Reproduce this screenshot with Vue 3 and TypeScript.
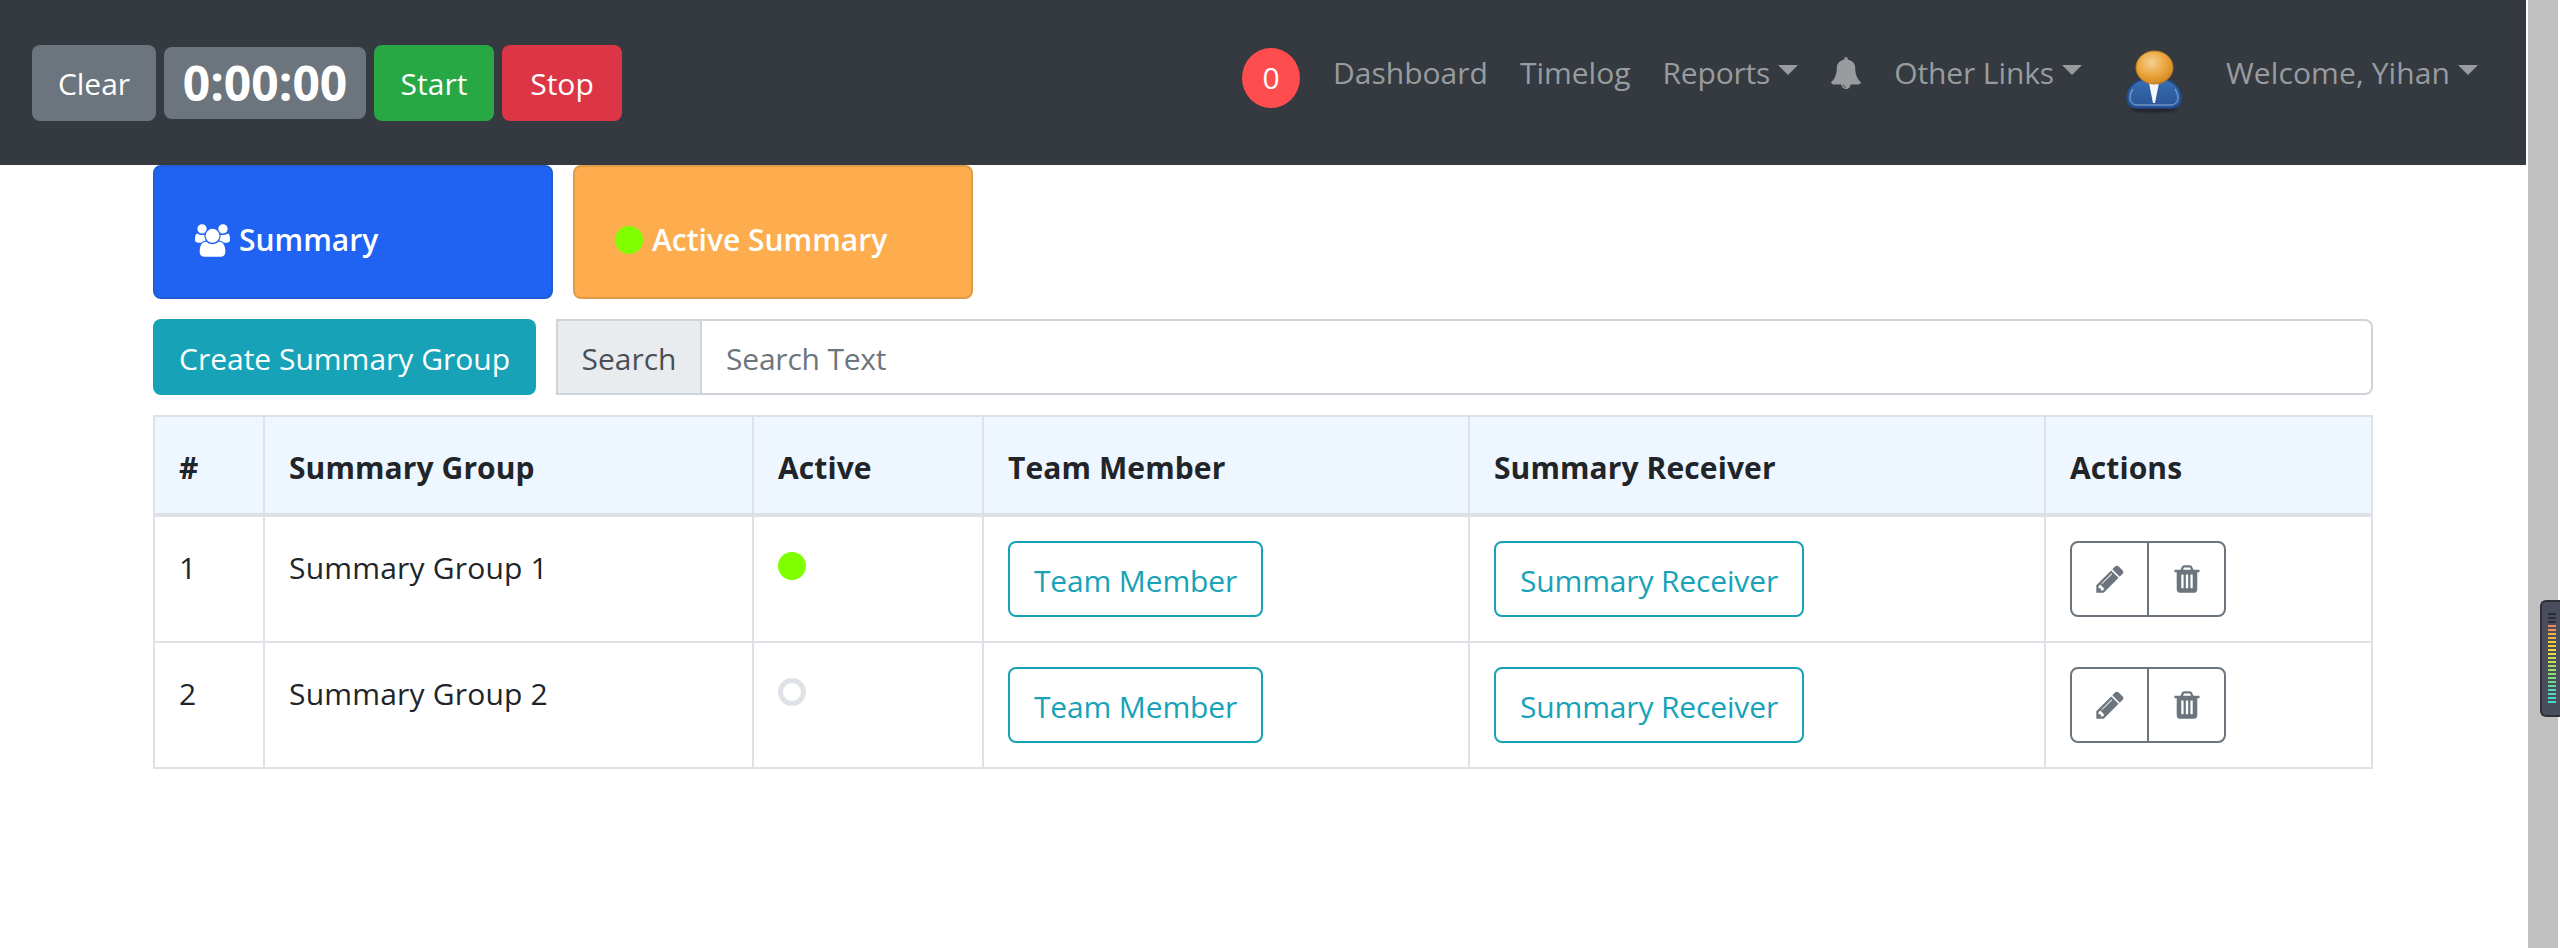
<script setup lang="ts">
interface SummaryRow {
  id: number
  name: string
  active: boolean
}

const rows: SummaryRow[] = [
  { id: 1, name: "Summary Group 1", active: true },
  { id: 2, name: "Summary Group 2", active: false },
]

const columns = ["#", "Summary Group", "Active", "Team Member", "Summary Receiver", "Actions"]
const columnWidths = [110, 489, 230, 486, 576, 327]

// little level meter on the scrollbar, top three are off
const meterColors = [
  "#2b2d38", "#2b2d38", "#2b2d38",
  "#f08a5c", "#f09a55", "#f5ae45", "#f5b83d", "#f7c535", "#f5cf35", "#f2d93a",
  "#e5dd45", "#d4df4d", "#c4e055", "#b0e05c", "#9fdf65", "#8ede70", "#7edd80",
  "#6cdc90", "#5cdca0", "#50dcb0", "#48dcbc", "#42dcc4", "#3edccc",
]

const pencilPath =
  "M491 1536l91-91-235-235-91 91v107h128v128h107zm523-928q0-22-22-22-10 0-17 7l-542 542q-7 7-7 17 0 22 22 22 10 0 17-7l542-542q7-7 7-17zm-54-192l416 416-832 832h-416v-416zm683 96q0 53-37 90l-166 166-416-416 166-165q36-38 90-38 53 0 91 38l235 234q37 39 37 91z"
const trashPath =
  "M704 1376v-704q0-14-9-23t-23-9h-64q-14 0-23 9t-9 23v704q0 14 9 23t23 9h64q14 0 23-9t9-23zm256 0v-704q0-14-9-23t-23-9h-64q-14 0-23 9t-9 23v704q0 14 9 23t23 9h64q14 0 23-9t9-23zm256 0v-704q0-14-9-23t-23-9h-64q-14 0-23 9t-9 23v704q0 14 9 23t23 9h64q14 0 23-9t9-23zm-544-992h448l-48-117q-7-9-17-11h-317q-10 2-17 11zm928 32v64q0 14-9 23t-23 9h-96v948q0 83-47 143.5t-113 60.5h-832q-66 0-113-58.5t-47-141.5v-952h-96q-14 0-23-9t-9-23v-64q0-14 9-23t23-9h309l70-167q15-37 54-63t79-26h320q40 0 79 26t54 63l70 167h309q14 0 23 9t9 23z"
</script>

<template>
  <div class="page">
    <div class="main">
      <nav class="navbar">
        <div class="timer-group">
          <button class="btn btn-grey">Clear</button>
          <div class="timer">0:00:00</div>
          <button class="btn btn-green">Start</button>
          <button class="btn btn-red">Stop</button>
        </div>

        <div class="nav-right">
          <span class="badge">0</span>
          <a class="nav-link">Dashboard</a>
          <a class="nav-link">Timelog</a>
          <a class="nav-link reports">Reports<i class="caret" /></a>
          <a class="nav-link bell">
            <svg width="32" height="32" viewBox="0 0 1792 1792" fill="currentColor">
              <path d="M912 1696q0-16-16-16-59 0-101.5-42.5t-42.5-101.5q0-16-16-16t-16 16q0 73 51.5 124.5t124.5 51.5q16 0 16-16zm816-288q0 52-38 90t-90 38h-448q0 106-75 181t-181 75-181-75-75-181h-448q-52 0-90-38t-38-90q50-42 91-88t85-119.5 74.5-158.5 50-206 19.5-260q0-152 117-282.5t307-158.5q-8-19-8-39 0-40 28-68t68-28 68 28 28 68q0 20-8 39 190 28 307 158.5t117 282.5q0 139 19.5 260t50 206 74.5 158.5 85 119.5 91 88z" />
            </svg>
          </a>
          <a class="nav-link other">Other Links<i class="caret" /></a>
          <svg class="avatar" width="60" height="66" viewBox="0 0 60 66">
            <defs>
              <radialGradient id="head" cx="0.42" cy="0.35" r="0.7">
                <stop offset="0" stop-color="#f3cf97" />
                <stop offset="0.55" stop-color="#eba63c" />
                <stop offset="1" stop-color="#cf8420" />
              </radialGradient>
              <linearGradient id="suit" x1="0" y1="0" x2="0" y2="1">
                <stop offset="0" stop-color="#3a6db2" />
                <stop offset="1" stop-color="#275394" />
              </linearGradient>
              <filter id="soft"><feGaussianBlur stdDeviation="1.6" /></filter>
            </defs>
            <ellipse cx="30" cy="60" rx="24" ry="3.5" fill="#20232a" filter="url(#soft)" />
            <path d="M17 31C8 34 3 41 3 49c0 6 4 10 10 10h34c6 0 10-4 10-10 0-8-5-15-14-18z" fill="url(#suit)" stroke="#1f4a8a" stroke-width="1.5" />
            <path d="M14 56c-5 0-8-3-8-7 0-3 1-6 3-9M46 56c5 0 8-3 8-7 0-3-1-6-3-9M14 56h32" fill="none" stroke="#7fa3d2" stroke-width="1.4" opacity="0.8" />
            <path d="M25 34h10l-4 20h-2z" fill="#f4f6f8" />
            <ellipse cx="30.5" cy="18.5" rx="18.5" ry="16.5" fill="url(#head)" stroke="#bd7b22" stroke-width="1" />
          </svg>
          <a class="nav-link welcome">Welcome, Yihan<i class="caret" /></a>
        </div>
      </nav>

      <div class="content">
        <div class="tabs">
          <button class="tab tab-blue">
            <svg class="users" width="35" height="33" viewBox="0 0 1920 1792" fill="currentColor">
              <path d="M593 896q-162 5-265 128h-134q-82 0-138-40.5t-56-118.5q0-353 124-353 6 0 43.5 21t97.5 42.5 119 21.5q67 0 133-23-5 37-5 66 0 139 81 256zm1071 637q0 120-73 189.5t-194 69.5h-874q-121 0-194-69.5t-73-189.5q0-53 3.5-103.5t14-109 26.5-108.5 43-97.5 62-81 85.5-53.5 111.5-20q10 0 43 21.5t73 48 107 48 135 21.5 135-21.5 107-48 73-48 43-21.5q61 0 111.5 20t85.5 53.5 62 81 43 97.5 26.5 108.5 14 109 3.5 103.5zm-1024-1277q0 106-75 181t-181 75-181-75-75-181 75-181 181-75 181 75 75 181zm704 384q0 159-112.5 271.5t-271.5 112.5-271.5-112.5-112.5-271.5 112.5-271.5 271.5-112.5 271.5 112.5 112.5 271.5zm576 225q0 78-56 118.5t-138 40.5h-134q-103-123-265-128 81-117 81-256 0-29-5-66 66 23 133 23 59 0 119-21.5t97.5-42.5 43.5-21q124 0 124 353zm-128-609q0 106-75 181t-181 75-181-75-75-181 75-181 181-75 181 75 75 181z" />
            </svg>
            Summary
          </button>
          <button class="tab tab-orange"><i class="dot dot-on" />Active Summary</button>
        </div>

        <div class="toolbar">
          <button class="btn btn-teal">Create Summary Group</button>
          <div class="search">
            <span class="search-label">Search</span>
            <input class="search-input" type="text" placeholder="Search Text" />
          </div>
        </div>

        <table class="summary-table">
          <colgroup>
            <col v-for="(w, i) in columnWidths" :key="i" :style="{ width: w + 'px' }" />
          </colgroup>
          <thead>
            <tr>
              <th v-for="col in columns" :key="col">{{ col }}</th>
            </tr>
          </thead>
          <tbody>
            <tr v-for="row in rows" :key="row.id">
              <td class="text-cell">{{ row.id }}</td>
              <td class="text-cell">{{ row.name }}</td>
              <td class="status"><i class="dot" :class="row.active ? 'dot-on' : 'dot-off'" /></td>
              <td><button class="btn btn-outline">Team Member</button></td>
              <td><button class="btn btn-outline">Summary Receiver</button></td>
              <td>
                <div class="actions">
                  <button class="action">
                    <svg width="32" height="32" viewBox="0 0 1792 1792" fill="currentColor"><path :d="pencilPath" /></svg>
                  </button>
                  <button class="action">
                    <svg width="32" height="32" viewBox="0 0 1792 1792" fill="currentColor"><path :d="trashPath" /></svg>
                  </button>
                </div>
              </td>
            </tr>
          </tbody>
        </table>
      </div>
    </div>

    <div class="scrollbar">
      <div class="meter">
        <span v-for="(c, i) in meterColors" :key="i" class="meter-bar" :style="{ background: c }" />
      </div>
    </div>
  </div>
</template>

<style scoped>
.page {
  display: flex;
  height: 948px;
  font-family: "Open Sans", "Liberation Sans", sans-serif;
  font-size: 30px;
  line-height: 48px;
  color: #212529;
  background: #fff;
  overflow: hidden;
}

.main {
  width: 2526px;
  flex: none;
}

.navbar {
  height: 165px;
  box-sizing: border-box;
  padding: 0 32px;
  display: flex;
  align-items: center;
  justify-content: space-between;
  background: #343a40;
}

.timer-group {
  display: flex;
  align-items: center;
  gap: 8px;
}

.btn {
  height: 76px;
  box-sizing: border-box;
  padding: 3px 24px 0;
  border: 2px solid transparent;
  border-radius: 8px;
  font: inherit;
  color: #fff;
  white-space: nowrap;
}

.btn-grey {
  width: 124px;
  padding: 3px 0 0;
  background: #6c757d;
}

.btn-green {
  width: 120px;
  padding: 3px 0 0;
  background: #28a745;
}

.btn-red {
  width: 120px;
  padding: 3px 0 0;
  background: #dc3545;
}

.btn-teal {
  width: 383px;
  padding: 3px 0 0;
  background: #17a2b8;
}

.btn-outline {
  background: #fff;
  border-color: #17a2b8;
  color: #17a2b8;
  letter-spacing: -0.15px;
}

.timer {
  width: 202px;
  height: 72px;
  line-height: 72px;
  text-align: center;
  border-radius: 8px;
  background: #6c757d;
  color: #fff;
  font-size: 48px;
  font-weight: 700;
}

.nav-right {
  display: flex;
  align-items: center;
  margin-bottom: 20px;
  color: #999c9f;
}

.badge {
  width: 58px;
  height: 60px;
  margin: 10px 17px 0 0;
  border-radius: 50%;
  background: #ff4d4f;
  color: #fff;
  text-align: center;
  line-height: 60px;
}

.nav-link {
  display: flex;
  align-items: center;
  padding: 16px;
  white-space: nowrap;
}

.welcome {
  letter-spacing: 0.1px;
}

.reports {
  letter-spacing: -0.2px;
}

.other {
  letter-spacing: -0.1px;
}

.bell {
  height: 80px;
  box-sizing: border-box;
}

.caret {
  display: inline-block;
  margin: -5px 0 0 8px;
  border-top: 10px solid currentColor;
  border-left: 10px solid transparent;
  border-right: 10px solid transparent;
}

.avatar {
  margin: 18px 26px 0;
}

.content {
  padding-left: 153px;
  width: 2220px;
}

.tabs {
  display: flex;
  gap: 20px;
}

.tab {
  width: 400px;
  height: 134px;
  box-sizing: border-box;
  padding: 16px 40px 0;
  display: flex;
  align-items: center;
  border: 2px solid;
  border-radius: 8px;
  font: inherit;
  font-weight: 600;
  color: #fff;
}

.tab-blue {
  background: #2062f2;
  border-color: #1f5ed0;
}

.tab-orange {
  background: #fdad4e;
  border-color: #e09b47;
}

.users {
  margin-right: 9px;
}

.dot {
  display: inline-block;
  flex: none;
  width: 28px;
  height: 28px;
  box-sizing: border-box;
  border-radius: 50%;
}

.dot-on {
  background: #7fff00;
}

.dot-off {
  border: 5px solid #dee2e6;
}

.tab .dot {
  margin-right: 9px;
}

.toolbar {
  display: flex;
  gap: 20px;
  margin-top: 20px;
}

.search {
  flex: 1;
  display: flex;
  height: 76px;
}

.search-label {
  width: 146px;
  box-sizing: border-box;
  border: 2px solid #ced4da;
  background: #e9ecef;
  color: #495057;
  text-align: center;
  line-height: 76px;
}

.search-input {
  flex: 1;
  min-width: 0;
  box-sizing: border-box;
  padding: 3px 24px 0;
  border: 2px solid #ced4da;
  border-left: 0;
  border-radius: 0 8px 8px 0;
  outline: none;
  font: inherit;
  letter-spacing: -0.2px;
  color: #495057;
}

.search-input::placeholder {
  color: #6c757d;
  opacity: 1;
}

.summary-table {
  width: 2218px;
  margin-top: 20px;
  table-layout: fixed;
  border-collapse: collapse;
}

.summary-table th,
.summary-table td {
  padding: 24px;
  border: 2px solid #dee2e6;
  text-align: left;
  vertical-align: top;
}

.summary-table th {
  padding: 27px 24px 21px;
  background: #eef7ff;
  border-bottom-width: 4px;
  font-weight: 700;
  letter-spacing: 0.1px;
}

.summary-table .text-cell {
  padding: 27px 24px 21px;
  letter-spacing: 0.2px;
}

.status {
  line-height: 0;
}

.status .dot {
  margin-top: 11px;
}

.actions {
  display: flex;
  width: 156px;
  height: 76px;
  box-sizing: border-box;
  border: 2px solid #6c757d;
  border-radius: 8px;
}

.action {
  flex: 1;
  display: flex;
  align-items: center;
  justify-content: center;
  padding: 0;
  border: 0;
  background: none;
  color: #6c757d;
}

.action + .action {
  border-left: 2px solid #6c757d;
}

.scrollbar {
  position: relative;
  width: 30px;
  margin: 0 2px;
  background: #c0c0c0;
}

.meter {
  position: absolute;
  left: 12px;
  top: 600px;
  width: 20px;
  height: 117px;
  box-sizing: border-box;
  padding: 11px 4px 0 6px;
  display: flex;
  flex-direction: column;
  gap: 2px;
  background: #4a4e5c;
  border: 2px solid #2c2e38;
  border-right: 0;
  border-radius: 6px 0 0 6px;
}

.meter-bar {
  display: block;
  height: 2px;
  flex: none;
}
</style>

<style>
html,
body {
  margin: 0;
  overflow: hidden;
}
</style>
